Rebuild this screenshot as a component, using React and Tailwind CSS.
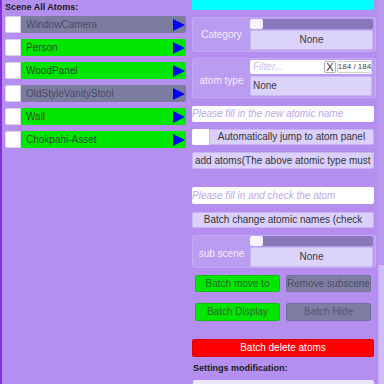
const atoms = [
  { name: "WindowCamera", active: false },
  { name: "Person", active: true },
  { name: "WoodPanel", active: true },
  { name: "OldStyleVanityStool", active: false },
  { name: "Wall", active: true },
  { name: "Chokpahi-Asset", active: true },
]

const Arrow = () => (
  <svg width="12" height="12" viewBox="0 0 12 12" className="shrink-0">
    <polygon points="0,0 12,6 0,12" fill="#0000ff" />
  </svg>
)

const AtomRow = ({ name, active }) => (
  <div className="flex h-[17px] w-[181px] mb-[6px]">
    <div className="w-[16px] h-full bg-white border border-[#d8d0ee] rounded-l-[2px]" />
    <div
      className={`flex-1 flex items-center justify-between pl-[5px] pr-[1px] rounded-r-[2px] ${
        active ? "bg-[#00e600] text-[#2f4a2f]" : "bg-[#7c7c9e] text-[#4a4a66]"
      }`}
    >
      <span className="truncate">{name}</span>
      <Arrow />
    </div>
  </div>
)

const Slider = () => (
  <div className="h-[10px] w-full bg-[#8877bb] rounded-[2px] flex shrink-0">
    <div className="w-[13px] h-full bg-[#f8f5ff] rounded-[2px]" />
  </div>
)

const NoneBox = ({ left }) => (
  <div
    className={`h-[20px] shrink-0 w-full bg-[#dcd3fb] border border-[#c9b8f3] rounded-[2px] flex items-center text-[#3a3a3a] ${
      left ? "pl-[2px]" : "justify-center"
    }`}
  >
    None
  </div>
)

const LightButton = ({ children, className = "" }) => (
  <div
    className={`w-[182px] bg-[#dad0fb] border border-[#c6b4f3] rounded-[2px] flex items-center text-[#333] whitespace-nowrap overflow-hidden ${className}`}
  >
    {children}
  </div>
)

const TextInput = ({ placeholder, className = "" }) => (
  <div
    className={`w-[182px] bg-white rounded-[2px] flex items-center italic text-[#bba8e8] whitespace-nowrap overflow-hidden ${className}`}
  >
    {placeholder}
  </div>
)

export default function App() {
  return (
    <div
      className="w-[384px] h-[384px] overflow-hidden bg-[#b48fef] flex text-[10px] leading-none"
      style={{ fontFamily: '"Liberation Sans", Arial, sans-serif' }}
    >
      {/* left: scene atoms */}
      <div className="w-[192px] h-full border-l-2 border-[#8a2be2] pl-[3px] shrink-0">
        <div className="text-[9px] font-bold text-[#1a1a1a] pt-[3px] h-[16px]">Scene All Atoms:</div>
        {atoms.map((a) => (
          <AtomRow key={a.name} {...a} />
        ))}
      </div>

      {/* right: operations */}
      <div className="w-[186px] h-full shrink-0 flex flex-col *:shrink-0">
        <div className="h-[10px] w-[182px] bg-[#00ffff]" />

        <div className="mt-[7px] h-[35px] w-[184px] bg-[#ba9cf1] border border-[#c3aaf3] rounded-[2px] flex">
          <div className="w-[57px] flex items-center justify-center text-[#f3eeff]">Category</div>
          <div className="w-[123px] flex flex-col gap-[1px] pt-[1px]">
            <Slider />
            <NoneBox />
          </div>
        </div>

        <div className="mt-[6px] h-[40px] w-[184px] bg-[#ba9cf1] border border-[#c3aaf3] rounded-[2px] flex">
          <div className="w-[57px] flex items-center justify-center text-[#f3eeff] pt-[6px]">atom type</div>
          <div className="w-[122px] flex flex-col gap-[2px] pt-[1px]">
            <div className="h-[14px] shrink-0 bg-white rounded-[2px] flex items-center whitespace-nowrap">
              <span className="italic text-[#cdbdf2] pl-[3px] flex-1">Filter...</span>
              <span className="h-[12px] w-[12px] border border-[#b0b0c0] rounded-[2px] flex items-center justify-center text-[#333] text-[11px]">
                X
              </span>
              <span className="h-[12px] w-[35px] border border-[#d0d0dc] rounded-[2px] flex items-center justify-center text-[#444] text-[8px] ml-[1px]">
                184 / 184
              </span>
            </div>
            <NoneBox left />
          </div>
        </div>

        <TextInput placeholder="Please fill in the new atomic name" className="mt-[8px] h-[16px]" />

        <div className="mt-[7px] h-[16px] w-[182px] flex">
          <div className="w-[17px] h-full bg-white rounded-l-[2px]" />
          <div className="flex-1 bg-[#dad0fb] border border-[#c6b4f3] rounded-r-[2px] flex items-center justify-center text-[#333]">
            Automatically jump to atom panel
          </div>
        </div>

        <LightButton className="mt-[7px] h-[17px] pl-[2px]">add atoms(The above atomic type must</LightButton>

        <TextInput placeholder="Please fill in and check the atom" className="mt-[18px] h-[17px]" />

        <LightButton className="mt-[8px] h-[16px] justify-center">Batch change atomic names (check</LightButton>

        <div className="mt-[7px] h-[33px] w-[184px] bg-[#ba9cf1] border border-[#c3aaf3] rounded-[2px] flex">
          <div className="w-[57px] flex items-center justify-center text-[#f3eeff] pt-[4px]">sub scene</div>
          <div className="w-[123px] flex flex-col gap-[1px]">
            <Slider />
            <NoneBox />
          </div>
        </div>

        <div className="mt-[7px] h-[17px] w-[182px] flex justify-between px-[3px]">
          <div className="w-[85px] bg-[#00e600] border border-[#10c010] rounded-[2px] flex items-center justify-center text-[#2d6a2d]">
            Batch move to
          </div>
          <div className="w-[85px] bg-[#7e7ea2] border border-[#72729a] rounded-[2px] flex items-center justify-center text-[#4c4c68] whitespace-nowrap">
            Remove subscene
          </div>
        </div>

        <div className="mt-[11px] h-[18px] w-[182px] flex justify-between px-[3px]">
          <div className="w-[85px] bg-[#00e600] border border-[#10c010] rounded-[2px] flex items-center justify-center text-[#2d6a2d]">
            Batch Display
          </div>
          <div className="w-[85px] bg-[#7e7ea2] border border-[#72729a] rounded-[2px] flex items-center justify-center text-[#555574]">
            Batch Hide
          </div>
        </div>

        <div className="mt-[18px] h-[18px] w-[182px] bg-[#ff0000] border border-[#e00000] rounded-[2px] flex items-center justify-center text-white">
          Batch delete atoms
        </div>

        <div className="mt-[7px] pl-[1px] text-[9px] font-bold text-[#1a1a1a]">Settings modification:</div>

        <div className="mt-[7px] ml-[1px] h-[14px] w-[181px] bg-[#ece6ff] rounded-[2px]" />
      </div>

      {/* scroll strip */}
      <div className="w-[6px] h-full flex flex-col">
        <div className="h-[265px] bg-[#b998f0]" />
        <div className="flex-1 bg-[#cdbcf5] border-l border-[#c3aef3]" />
      </div>
    </div>
  )
}
